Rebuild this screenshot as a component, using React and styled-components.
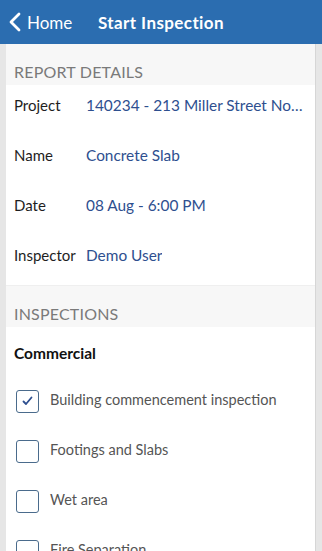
import React from "react";
import styled, { createGlobalStyle } from "styled-components";

const Global = createGlobalStyle`
  html, body { margin: 0; padding: 0; background: #e6e6e6; }
  body { font-family: Lato, "Open Sans", sans-serif; -webkit-font-smoothing: antialiased; }
  * { box-sizing: border-box; }
`;

const Page = styled.div`
  width: 322px;
  height: 551px;
  overflow: hidden;
  display: flex;
  flex-direction: column;
  background: #e6e6e6;
`;

const NavBar = styled.div`
  height: 44px;
  flex: none;
  background: #2b6db0;
  display: flex;
  align-items: center;
  padding-left: 8px;
  color: #fff;
`;

const Back = styled.div`
  display: flex;
  align-items: center;
  gap: 6px;
  font-size: 17px;
  width: 90px;
`;

const Title = styled.div`
  font-size: 17px;
  font-weight: 700;
  letter-spacing: 0.4px;
`;

const Card = styled.div`
  margin: 0 6px;
  flex: 1;
  background: #fff;
  border-right: 1px solid #d6d6d6;
  display: flex;
  flex-direction: column;
`;

const SectionHeader = styled.div`
  background: #f7f7f7;
  height: ${p => p.$h}px;
  padding: 18px 0 0 8px;
  font-size: 16px;
  line-height: 20px;
  color: #7a7a7a;
  text-transform: uppercase;
  letter-spacing: 0.2px;
  border-top: ${p => (p.$line ? "1px solid #efefef" : "none")};
`;

const DetailRow = styled.div`
  height: 50px;
  display: flex;
  padding: 10px 8px 0 8px;
  font-size: 15px;
  line-height: 20px;
`;

const Label = styled.div`
  width: 72px;
  flex: none;
  color: #1e1e1e;
`;

const Value = styled.div`
  color: #2e4f8f;
  font-size: 15.4px;
  white-space: nowrap;
  overflow: hidden;
  text-overflow: ellipsis;
`;

const Group = styled.div`
  height: 49px;
  padding: 16px 0 0 8px;
  font-size: 15.5px;
  line-height: 20px;
  font-weight: 700;
  color: #111;
`;

const CheckRow = styled.div`
  height: 50px;
  display: flex;
  align-items: center;
  padding-left: 10px;
  gap: 11px;
  font-size: 14.5px;
  color: #555;
  flex: none;
`;

const Box = styled.div`
  width: 23px;
  height: 23px;
  border: 1.5px solid #4a6b8c;
  border-radius: 3px;
  display: flex;
  align-items: center;
  justify-content: center;
  flex: none;
`;

const ItemText = styled.div`
  margin-top: -4px;
`;

const details = [
  ["Project", "140234 - 213 Miller Street North Sydney"],
  ["Name", "Concrete Slab"],
  ["Date", "08 Aug - 6:00 PM"],
  ["Inspector", "Demo User"],
];

const items = [
  ["Building commencement inspection", true],
  ["Footings and Slabs", false],
  ["Wet area", false],
  ["Fire Separation", false],
];

export default function App() {
  return (
    <Page>
      <Global />
      <NavBar>
        <Back>
          <svg width="13" height="20" viewBox="0 0 13 20">
            <polyline points="11,2 3,10 11,18" fill="none" stroke="#fff" strokeWidth="2.8" strokeLinecap="round" strokeLinejoin="round" />
          </svg>
          Home
        </Back>
        <Title>Start Inspection</Title>
      </NavBar>
      <Card>
        <SectionHeader $h={41}>Report Details</SectionHeader>
        {details.map(([l, v]) => (
          <DetailRow key={l}>
            <Label>{l}</Label>
            <Value>{v}</Value>
          </DetailRow>
        ))}
        <SectionHeader $h={42} $line>Inspections</SectionHeader>
        <Group>Commercial</Group>
        {items.map(([t, c]) => (
          <CheckRow key={t}>
            <Box>
              {c && (
                <svg width="11" height="10" viewBox="0 0 11 10">
                  <polyline points="1.5,5.5 4,8 9.5,1.5" fill="none" stroke="#2e4f8f" strokeWidth="1.8" strokeLinecap="round" strokeLinejoin="round" />
                </svg>
              )}
            </Box>
            <ItemText>{t}</ItemText>
          </CheckRow>
        ))}
      </Card>
    </Page>
  );
}
